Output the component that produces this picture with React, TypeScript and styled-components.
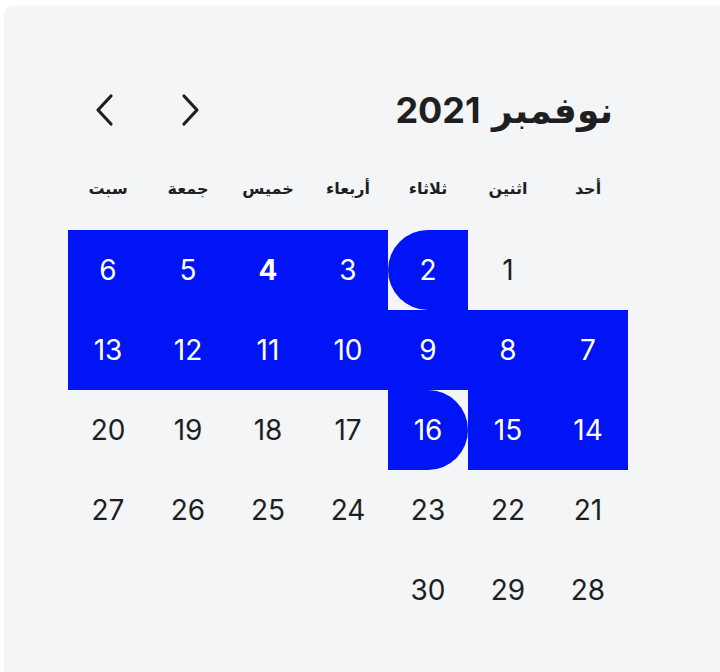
import React from "react";
import styled, { createGlobalStyle } from "styled-components";

const GlobalStyle = createGlobalStyle`
  html, body {
    margin: 0;
    padding: 0;
    background: #ffffff;
    overflow: hidden;
  }
  body {
    font-family: "Inter", "DejaVu Sans", sans-serif;
  }
`;

const BLUE = "#0014f5";
const INK = "#1f1f22";

const Page = styled.div`
  padding: 6px 0 0 4px;
`;

const Panel = styled.div`
  width: 716px;
  height: 666px;
  box-sizing: border-box;
  background: #f4f5f7;
  border-radius: 8px 0 0 0;
  padding: 80px 0 0 64px;
`;

const Calendar = styled.div`
  width: 560px;
  direction: rtl;
`;

const Header = styled.div`
  display: flex;
  align-items: center;
  justify-content: space-between;
  height: 48px;
  padding: 0 15px 0 17px;
`;

const Title = styled.h1`
  margin: 0;
  font-size: 36px;
  font-weight: 700;
  line-height: 48px;
  word-spacing: 3px;
  color: ${INK};
  font-family: "Inter", "DejaVu Sans", sans-serif;
`;

const Nav = styled.div`
  display: flex;
  align-items: center;
  gap: 45px;
`;

const NavButton = styled.button`
  width: 40px;
  height: 40px;
  padding: 0;
  border: none;
  background: transparent;
  display: flex;
  align-items: center;
  justify-content: center;
  color: ${INK};
  cursor: pointer;
`;

const WeekRow = styled.div`
  display: grid;
  grid-template-columns: repeat(7, 80px);
  height: 40px;
  margin-top: 34px;
`;

const WeekDay = styled.div`
  display: flex;
  align-items: center;
  justify-content: center;
  font-size: 16px;
  font-weight: 700;
  color: ${INK};
`;

const Grid = styled.div`
  display: grid;
  grid-template-columns: repeat(7, 80px);
  grid-auto-rows: 80px;
  margin-top: 22px;
`;

type CellProps = { $selected?: boolean; $edge?: "start" | "end"; $today?: boolean };

const Cell = styled.div<CellProps>`
  display: flex;
  align-items: center;
  justify-content: center;
  font-size: 28px;
  font-weight: ${(p) => (p.$today ? 700 : 400)};
  color: ${(p) => (p.$selected ? "#ffffff" : INK)};
  background: ${(p) => (p.$selected ? BLUE : "transparent")};
  border-radius: ${(p) =>
    p.$edge === "start" ? "40px 0 0 40px" : p.$edge === "end" ? "0 40px 40px 0" : "0"};
`;

const Chevron: React.FC<{ dir: "left" | "right" }> = ({ dir }) => (
  <svg width="20" height="34" viewBox="0 0 20 34" fill="none">
    <polyline
      points={dir === "left" ? "16,3 3,17 16,31" : "4,3 17,17 4,31"}
      stroke="currentColor"
      strokeWidth="3.2"
      strokeLinecap="round"
      strokeLinejoin="round"
    />
  </svg>
);

const weekDays = ["أحد", "اثنين", "ثلاثاء", "أربعاء", "خميس", "جمعة", "سبت"];

const RANGE_START = 2;
const RANGE_END = 16;
const TODAY = 4;

export default function App() {
  const cells: (number | null)[] = [null];
  for (let d = 1; d <= 30; d++) cells.push(d);

  return (
    <>
      <GlobalStyle />
      <Page>
        <Panel>
          <Calendar>
            <Header>
              <Title>نوفمبر 2021</Title>
              <Nav>
                <NavButton aria-label="next">
                  <Chevron dir="right" />
                </NavButton>
                <NavButton aria-label="previous">
                  <Chevron dir="left" />
                </NavButton>
              </Nav>
            </Header>
            <WeekRow>
              {weekDays.map((w) => (
                <WeekDay key={w}>{w}</WeekDay>
              ))}
            </WeekRow>
            <Grid>
              {cells.map((d, i) => {
                if (d === null) return <Cell key={`e${i}`} />;
                const selected = d >= RANGE_START && d <= RANGE_END;
                const edge = d === RANGE_START ? "start" : d === RANGE_END ? "end" : undefined;
                return (
                  <Cell key={d} $selected={selected} $edge={edge} $today={d === TODAY}>
                    {d}
                  </Cell>
                );
              })}
            </Grid>
          </Calendar>
        </Panel>
      </Page>
    </>
  );
}
